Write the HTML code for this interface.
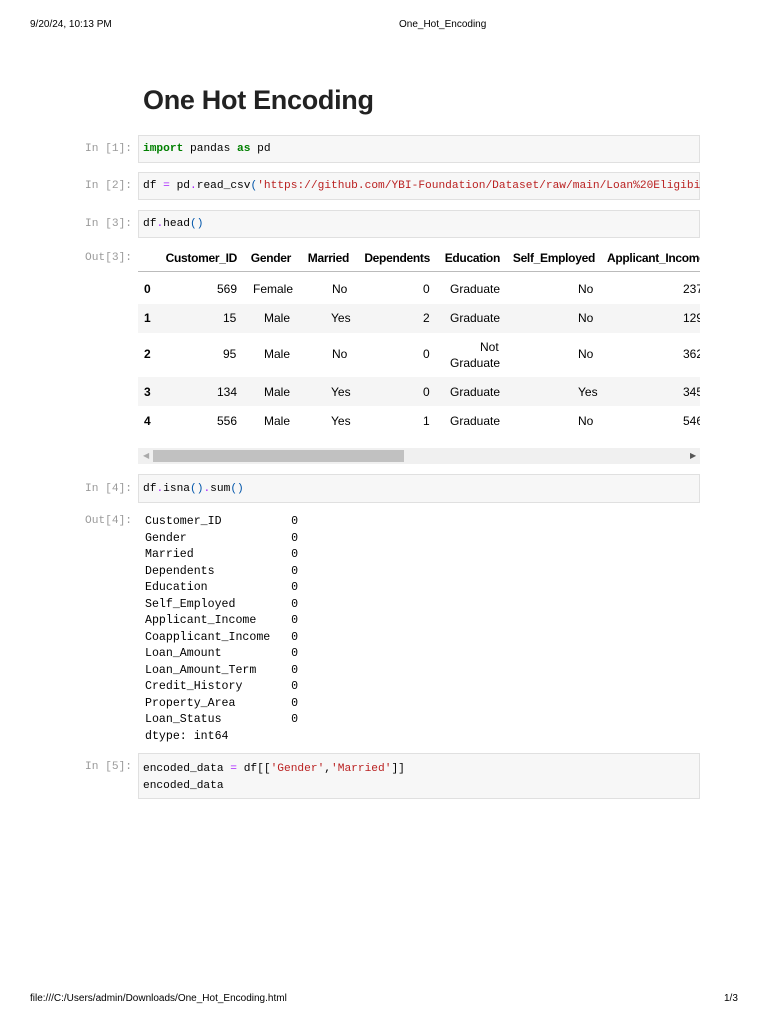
<!DOCTYPE html>
<html><head><meta charset="utf-8"><style>
body{margin:0;width:768px;height:1024px;background:#fff;position:relative;overflow:hidden;font-family:"Liberation Sans",sans-serif;color:#000}
.a{position:absolute;white-space:nowrap}
.hdr{font-size:10px;color:#000}
.title{left:143px;top:85px;font-size:27px;font-weight:bold;color:#222;letter-spacing:-0.3px}
.box{position:absolute;left:138px;width:562px;background:#f7f7f7;border:1px solid #e0e0e0;box-sizing:border-box}
.mono{font-family:"Liberation Mono","DejaVu Sans Mono",monospace;font-size:11.2px}
.pr{font-family:"Liberation Mono",monospace;font-size:11.2px;color:#9a9a9a;width:132px;left:0;text-align:right}
.code{left:143px}
.kw{color:#008000;font-weight:bold}
.op{color:#aa22ff}
.st{color:#ba2121}
.br{color:#0055aa}
.t{font-size:12px;color:#000}
.th{font-weight:bold;width:150px;text-align:right;letter-spacing:-0.3px}
.shade{position:absolute;left:138px;width:562px;background:#f5f5f5}
</style></head><body>
<div class="a hdr" style="left:30px;top:19px">9/20/24, 10:13 PM</div>
<div class="a hdr" style="left:399px;top:19px">One_Hot_Encoding</div>
<div class="a title">One Hot Encoding</div>

<div class="box" style="top:135px;height:28px"></div>
<div class="a pr" style="top:143px">In [1]:</div>
<div class="a mono code" style="top:143px"><span class="kw">import</span> pandas <span class="kw">as</span> pd</div>

<div class="box" style="top:172px;height:28px"></div>
<div class="a pr" style="top:180px">In [2]:</div>
<div class="a mono code" style="top:180px;width:557px;overflow:hidden">df <span class="op">=</span> pd<span class="op">.</span>read_csv<span class="br">(</span><span class="st">'https://github.com/YBI-Foundation/Dataset/raw/main/Loan%20Eligibility.csv'</span></div>

<div class="box" style="top:210px;height:28px"></div>
<div class="a pr" style="top:218px">In [3]:</div>
<div class="a mono code" style="top:218px">df<span class="op">.</span>head<span class="br">()</span></div>

<div class="a pr" style="top:252px">Out[3]:</div>
<div class="a" style="left:138px;top:271px;width:562px;height:1px;background:#bbb"></div>
<div class="shade" style="top:304px;height:29px"></div>
<div class="shade" style="top:377px;height:29px"></div>

<div style="position:absolute;left:138px;top:240px;width:562px;height:200px;overflow:hidden"><div style="position:absolute;left:-138px;top:-240px;width:900px;height:500px">
<div class="a t th" style="left:87px;top:251px">Customer_ID</div>
<div class="a t th" style="left:141px;top:251px">Gender</div>
<div class="a t th" style="left:199px;top:251px">Married</div>
<div class="a t th" style="left:280px;top:251px">Dependents</div>
<div class="a t th" style="left:350px;top:251px">Education</div>
<div class="a t th" style="left:445px;top:251px">Self_Employed</div>
<div class="a t" style="left:607px;top:251px;font-weight:bold;letter-spacing:-0.3px">Applicant_Income</div>
<div class="a t" style="left:144px;top:282px;font-weight:bold">0</div>
<div class="a t" style="left:217px;top:282px">569</div>
<div class="a t" style="left:253px;top:282px">Female</div>
<div class="a t" style="left:332px;top:282px">No</div>
<div class="a t" style="left:423px;top:282px">0</div>
<div class="a t" style="left:450px;top:282px">Graduate</div>
<div class="a t" style="left:578px;top:282px">No</div>
<div class="a t" style="left:683px;top:282px">2378</div>
<div class="a t" style="left:144px;top:311px;font-weight:bold">1</div>
<div class="a t" style="left:223px;top:311px">15</div>
<div class="a t" style="left:264px;top:311px">Male</div>
<div class="a t" style="left:331px;top:311px">Yes</div>
<div class="a t" style="left:423px;top:311px">2</div>
<div class="a t" style="left:450px;top:311px">Graduate</div>
<div class="a t" style="left:578px;top:311px">No</div>
<div class="a t" style="left:683px;top:311px">1299</div>
<div class="a t" style="left:144px;top:347px;font-weight:bold">2</div>
<div class="a t" style="left:223px;top:347px">95</div>
<div class="a t" style="left:264px;top:347px">Male</div>
<div class="a t" style="left:332px;top:347px">No</div>
<div class="a t" style="left:423px;top:347px">0</div>
<div class="a t" style="left:480px;top:340px">Not</div>
<div class="a t" style="left:450px;top:356px">Graduate</div>
<div class="a t" style="left:578px;top:347px">No</div>
<div class="a t" style="left:683px;top:347px">3620</div>
<div class="a t" style="left:144px;top:385px;font-weight:bold">3</div>
<div class="a t" style="left:217px;top:385px">134</div>
<div class="a t" style="left:264px;top:385px">Male</div>
<div class="a t" style="left:331px;top:385px">Yes</div>
<div class="a t" style="left:423px;top:385px">0</div>
<div class="a t" style="left:450px;top:385px">Graduate</div>
<div class="a t" style="left:578px;top:385px">Yes</div>
<div class="a t" style="left:683px;top:385px">3450</div>
<div class="a t" style="left:144px;top:414px;font-weight:bold">4</div>
<div class="a t" style="left:217px;top:414px">556</div>
<div class="a t" style="left:264px;top:414px">Male</div>
<div class="a t" style="left:331px;top:414px">Yes</div>
<div class="a t" style="left:423px;top:414px">1</div>
<div class="a t" style="left:450px;top:414px">Graduate</div>
<div class="a t" style="left:578px;top:414px">No</div>
<div class="a t" style="left:683px;top:414px">5468</div>
</div></div>

<div class="a" style="left:138px;top:448px;width:562px;height:16px;background:#f0f0f0"></div>
<div class="a" style="left:153px;top:450px;width:251px;height:12px;background:#c1c1c1"></div>
<div class="a" style="left:143px;top:451px;font-size:8px;color:#aaa">◀</div>
<div class="a" style="left:690px;top:451px;font-size:8px;color:#555">▶</div>

<div class="box" style="top:474px;height:29px"></div>
<div class="a pr" style="top:483px">In [4]:</div>
<div class="a mono code" style="top:483px">df<span class="op">.</span>isna<span class="br">()</span><span class="op">.</span>sum<span class="br">()</span></div>

<div class="a pr" style="top:515px">Out[4]:</div>
<pre class="mono" style="position:absolute;left:145px;top:514px;margin:0;line-height:16.5px;font-size:11.6px;white-space:pre">Customer_ID          0
Gender               0
Married              0
Dependents           0
Education            0
Self_Employed        0
Applicant_Income     0
Coapplicant_Income   0
Loan_Amount          0
Loan_Amount_Term     0
Credit_History       0
Property_Area        0
Loan_Status          0
dtype: int64</pre>

<div class="box" style="top:753px;height:46px"></div>
<div class="a pr" style="top:761px">In [5]:</div>
<div class="a mono code" style="top:761px;line-height:17px">encoded_data <span class="op">=</span> df[[<span class="st">'Gender'</span>,<span class="st">'Married'</span>]]<br>encoded_data</div>

<div class="a hdr" style="left:30px;top:993px">file:///C:/Users/admin/Downloads/One_Hot_Encoding.html</div>
<div class="a hdr" style="left:724px;top:993px">1/3</div>
</body></html>
